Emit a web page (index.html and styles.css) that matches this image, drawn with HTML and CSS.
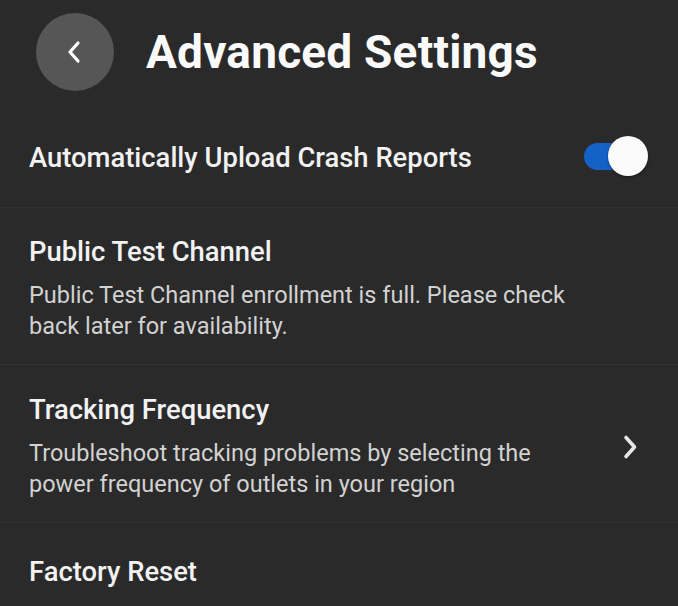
FILE: index.html
```html
<!DOCTYPE html>
<html>
<head>
<meta charset="utf-8">
<link rel="stylesheet" href="styles.css">
</head>
<body>
<div class="screen">
  <header class="header">
    <button class="back" aria-label="Back">
      <svg width="16" height="24" viewBox="0 0 16 24"><path d="M12 3 L4 12 L12 21" fill="none" stroke="#fff" stroke-width="3.2" stroke-linecap="round" stroke-linejoin="round"/></svg>
    </button>
    <h1 class="title">Advanced Settings</h1>
  </header>
  <div class="row row-toggle">
    <div class="row-text"><div class="label">Automatically Upload Crash Reports</div></div>
    <div class="toggle"><div class="track"></div><div class="thumb"></div></div>
  </div>
  <div class="row row-tall">
    <div class="row-text">
      <div class="label">Public Test Channel</div>
      <div class="desc">Public Test Channel enrollment is full. Please check<br>back later for availability.</div>
    </div>
  </div>
  <div class="row row-tall row-tall2">
    <div class="row-text">
      <div class="label">Tracking Frequency</div>
      <div class="desc">Troubleshoot tracking problems by selecting the<br>power frequency of outlets in your region</div>
    </div>
    <svg class="chev" width="18" height="26" viewBox="0 0 18 26"><path d="M5 3.5 L13.5 13 L5 22.5" fill="none" stroke="#e6e6e6" stroke-width="3.6" stroke-linecap="round" stroke-linejoin="round"/></svg>
  </div>
  <div class="row row-last">
    <div class="row-text"><div class="label">Factory Reset</div></div>
  </div>
</div>
</body>
</html>
```

FILE: styles.css
```css
html, body {
  margin: 0;
  padding: 0;
  background: #2a2a2a;
}
body {
  font-family: Roboto, "Liberation Sans", sans-serif;
  color: #f4f4f4;
  width: 678px;
  height: 606px;
  overflow: hidden;
}
.screen {
  display: flex;
  flex-direction: column;
}
.header {
  display: flex;
  align-items: flex-start;
  gap: 32px;
  padding: 13px 0 0 36px;
  height: 102px;
  box-sizing: border-box;
}
.back {
  width: 78px;
  height: 78px;
  border-radius: 50%;
  border: none;
  background: #565656;
  display: flex;
  align-items: center;
  justify-content: center;
  padding: 0 2px 0 0;
}
.title {
  margin: 0;
  font-size: 46px;
  font-weight: 700;
  line-height: 78px;
  color: #fafafa;
  letter-spacing: 0.2px;
}
.row {
  display: flex;
  align-items: center;
  padding: 0 30px 0 29px;
  border-bottom: 1px solid #333;
  box-sizing: border-box;
}
.row-toggle {
  height: 106px;
  padding-top: 7px;
}
.row-tall {
  height: 157px;
  padding-top: 5px;
}
.row-tall2 {
  height: 158px;
  padding-top: 6px;
}
.row-last {
  border-bottom: none;
  height: 84px;
  padding-top: 33px;
  align-items: flex-start;
}
.row-text {
  flex: 1;
}
.label {
  font-size: 27.4px;
  font-weight: 500;
  line-height: 32px;
  color: #f2f2f2;
}
.desc {
  margin-top: 12px;
  font-size: 23.5px;
  line-height: 31px;
  color: #d2d2d2;
}
.toggle {
  position: relative;
  width: 64px;
  height: 40px;
  margin-top: -4px;
}
.track {
  position: absolute;
  left: 0;
  top: 7px;
  width: 52px;
  height: 27px;
  border-radius: 14px;
  background: #1462c8;
}
.thumb {
  position: absolute;
  right: 0;
  top: 0;
  width: 40px;
  height: 40px;
  border-radius: 50%;
  background: #fbfbfb;
  box-shadow: 0 1px 3px rgba(0,0,0,0.4);
}
.chev {
  margin-right: 9px;
}
```
